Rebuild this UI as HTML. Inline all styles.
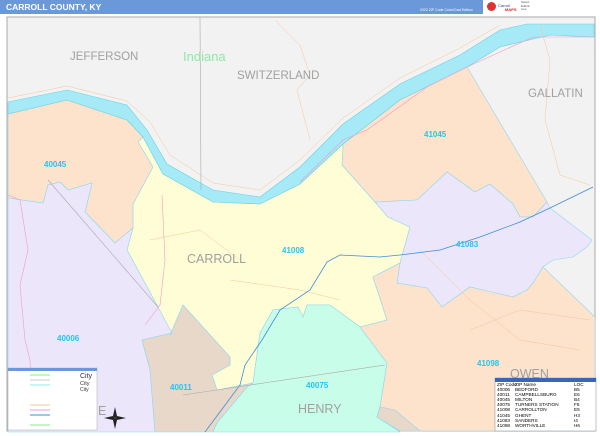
<!DOCTYPE html>
<html><head><meta charset="utf-8"><style>
body{margin:0;width:600px;height:436px;overflow:hidden;background:#fff;font-family:"Liberation Sans",sans-serif}
#hdr{position:absolute;left:0;top:0;width:600px;height:14px;background:#6a98d8}
#ttl{position:absolute;left:6px;top:2px;color:#fff;font-weight:bold;font-size:8.5px}
#ed{position:absolute;left:420px;top:8px;color:#fff;font-size:3.5px}
#logo{position:absolute;left:483px;top:0;width:117px;height:14px;background:#fff}
svg{position:absolute;left:0;top:0}
.t{position:absolute;font-size:4.7px;line-height:5.1px;color:#000;white-space:nowrap}
</style></head><body>
<div id="hdr"><div id="ttl">CARROLL COUNTY, KY</div><div id="ed">2022 ZIP Code Color/Cast Edition</div></div>
<div id="logo"><div style="position:absolute;left:4px;top:2px;width:9px;height:9px;border-radius:50%;background:#d33"></div><div style="position:absolute;left:15px;top:3px;font-size:4px;color:#338">Carroll</div><div style="position:absolute;left:22px;top:7px;font-size:4px;color:#d22;font-weight:bold">MAPS</div><div style="position:absolute;left:38px;top:1px;font-size:3px;line-height:3.5px;color:#555">Select<br>Edition<br>Line</div></div>
<svg width="600" height="436" viewBox="0 0 600 436">
<rect x="7" y="17" width="588" height="414" fill="#f2f2f2" stroke="#aaa" stroke-width="1"/>
<g stroke="#8fd8ee" stroke-width="0.6">
<polygon fill="#fffdd6" points="143,137 163,174 213,202 260,204 300,184 343,144 343,149 342,165 375,202 388,217 410,227 400,263 373,277 387,320 360,327 330,305 307,305 303,317 298,307 273,310 260,333 253,383 217,390 212,375 230,365 230,357 183,305 170,335 158,307 127,250 133,228 133,204 153,167 138,142"/>
<polygon fill="#fde2cc" points="8,114 67,100 127,120 143,137 138,142 153,167 133,204 133,228 115,243 85,212 92,183 68,190 60,182 48,185 43,203 8,198"/>
<polygon fill="#ece6fb" points="8,198 43,203 48,185 60,182 68,190 92,183 85,212 115,243 133,228 127,250 158,307 172,333 142,340 150,370 155,432 8,432"/>
<polygon fill="#e8d8ca" points="170,335 183,305 230,357 230,365 212,375 217,390 253,383 247,387 217,423 213,432 155,432 150,370 142,340 172,333"/>
<polygon fill="#c8fde9" points="273,310 298,307 303,317 307,305 330,305 360,327 387,363 380,407 377,417 400,432 213,432 217,423 247,387 253,383 260,333"/>
<polygon fill="#fde2cc" points="343,149 343,144 400,100 460,58 467,67 547,202 533,217 520,217 513,204 490,184 475,192 447,172 417,200 375,202 342,165"/>
<polygon fill="#ece6fb" points="375,202 417,200 447,172 475,192 490,184 513,204 520,217 533,217 547,202 550,208 592,240 587,247 573,257 553,260 543,267 533,283 527,290 513,297 507,297 483,290 470,287 442,307 427,288 397,283 400,263 410,227 388,217"/>
<polygon fill="#fde2cc" points="373,277 400,263 397,283 427,288 442,307 470,287 483,290 513,297 527,290 533,283 543,267 595,317 595,431 400,431 377,417 380,407 387,363 360,327 387,320"/>
<polygon fill="#e8d8ca" points="380,407 377,417 400,431 420,431 395,410"/>
</g>
<path fill="#a6e9f7" stroke="#6cd0e0" stroke-width="0.6" d="M8,102 L67,90 L127,105 L147,130 L167,164 L213,190 L260,197 L300,167 L343,124 L400,84 L460,55 L500,30 L527,24 L594,24 L594,37 L550,35 L500,47 L467,67 L400,100 L343,144 L300,184 L260,204 L213,202 L163,174 L143,137 L127,120 L67,100 L8,114 Z"/>
<g fill="none" stroke="#f5c79a" stroke-width="0.5">
<path d="M8,98 L67,86 L127,101 L150,122 L170,155 L213,183 L260,190 L300,160 L343,118 L400,78 L460,48 L500,25"/>
<path d="M275,20 L300,45 L310,75 L297,90 L310,140"/>
<path d="M540,25 L550,60 L545,120 L560,175 L590,185"/>
<path d="M420,250 L470,300 L520,340 L580,350"/><path d="M470,330 L520,310 L590,320"/>
<path d="M230,280 L300,290 L340,300"/><path d="M150,240 L200,230 L240,260"/>
</g>
<g fill="none" stroke="#f29ac8" stroke-width="0.6">
<path d="M300,182 L343,140 L367,130 L427,87 L467,67 L533,37 L593,37"/>
<path d="M8,195 L20,200 L28,250 L20,285 L25,340 L30,360 L32,420 L50,430"/>
<path d="M162,195 L165,260 L160,305 L145,325"/>
</g>
<path fill="none" stroke="#3c8ed8" stroke-width="0.8" d="M205,432 L240,385 L245,365 L262,340 L280,310 L310,290 L327,262 L340,255 L380,257 L400,255 L440,250 L480,237 L520,222 L550,208 L593,187"/>
<path fill="none" stroke="#aaa" stroke-width="0.6" d="M48,180 L158,307 M183,395 L385,365 M200,17 L201,190"/>
<g font-family="Liberation Sans" fill="#a0a0a0" font-size="11.5">
<text x="70" y="60">JEFFERSON</text><text x="237" y="79">SWITZERLAND</text><text x="528" y="97">GALLATIN</text>
<text x="187" y="263" font-size="12.5">CARROLL</text><text x="298" y="413" font-size="12.5">HENRY</text><text x="510" y="378" font-size="12.5">OWEN</text><text x="98" y="415" font-size="12.5">E</text>
</g>
<text x="183" y="61" font-family="Liberation Sans" font-size="13" fill="#8fe8a8">Indiana</text>
<g font-family="Liberation Sans" font-weight="bold" fill="#22c6f2" font-size="8">
<text x="44" y="167">40045</text><text x="424" y="137">41045</text><text x="282" y="253">41008</text><text x="456" y="247">41083</text>
<text x="57" y="341">40006</text><text x="170" y="390">40011</text><text x="306" y="388">40075</text><text x="477" y="366">41098</text>
</g>
<g transform="translate(115,418)" fill="#222"><polygon points="0,-11 2,-2 0,0 -2,-2"/><polygon points="0,11 2,2 0,0 -2,2"/><polygon points="-11,0 -2,2 0,0 -2,-2"/><polygon points="11,0 2,2 0,0 2,-2"/></g>
<rect x="8" y="368" width="89" height="62" fill="#fff" stroke="#aaa" stroke-width="0.5"/>
<rect x="8" y="368" width="89" height="3" fill="#6a98d8"/>
<g stroke-width="1"><line x1="30" y1="375" x2="50" y2="375" stroke="#8fe88f"/><line x1="30" y1="380" x2="50" y2="380" stroke="#ccc"/><line x1="30" y1="385" x2="50" y2="385" stroke="#8fe8f0"/><line x1="30" y1="405" x2="50" y2="405" stroke="#f5c79a"/><line x1="30" y1="410" x2="50" y2="410" stroke="#f29ac8"/><line x1="30" y1="415" x2="50" y2="415" stroke="#3c8ed8"/><line x1="30" y1="425" x2="50" y2="425" stroke="#8fe88f"/></g>
<g font-family="Liberation Sans" font-size="7" fill="#333"><text x="80" y="378">City</text><text x="80" y="385" font-size="5.5">City</text><text x="80" y="391" font-size="5">City</text></g>
<rect x="495" y="378" width="101" height="53" fill="#fff" stroke="#888" stroke-width="0.5"/>
<rect x="495" y="378" width="101" height="4" fill="#3a66b8"/>
</svg>
<div class="t" style="left:497px;top:382px">ZIP Code<br>40006<br>40011<br>40045<br>40075<br>41008<br>41045<br>41083<br>41098</div>
<div class="t" style="left:515px;top:382px">ZIP Name<br>BEDFORD<br>CAMPBELLSBURG<br>MILTON<br>TURNERS STATION<br>CARROLLTON<br>GHENT<br>SANDERS<br>WORTHVILLE</div>
<div class="t" style="left:574px;top:382px">LOC<br>B5<br>E6<br>B4<br>F6<br>E5<br>H3<br>I4<br>H6</div>
</body></html>
